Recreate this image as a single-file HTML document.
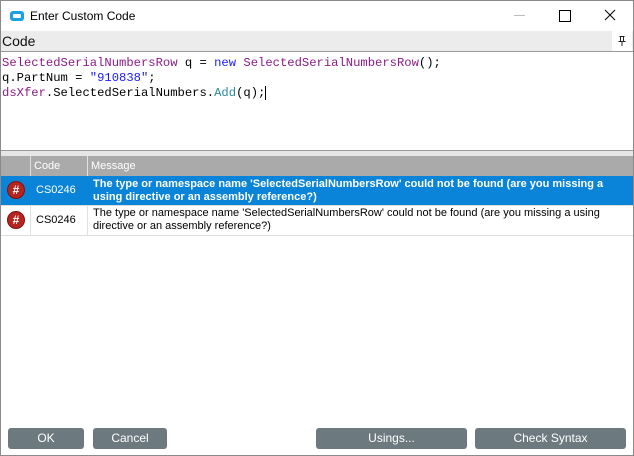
<!DOCTYPE html>
<html><head><style>
body{margin:0;width:634px;height:456px;overflow:hidden;background:#fff;font-family:"Liberation Sans",sans-serif;position:relative}
.win{position:absolute;inset:0;border:1px solid #8a8a8a;box-sizing:border-box}
.abs{position:absolute}
.code{font-family:"Liberation Mono",monospace;font-size:12.2px;line-height:15px;color:#000;white-space:pre}
.p{color:#8b1b8b}.b{color:#1a1aff}.t{color:#2b8a9a}
.btn{position:absolute;top:428px;height:21px;background:#6c7a80;color:#fff;border-radius:3px;font-size:12px;text-align:center;line-height:21px}
.hash{position:absolute;left:7px;width:16px;height:16px;border-radius:50%;background:#b5241e;border:1px solid #7a1410;color:#fff;font-weight:bold;font-size:12px;text-align:center;line-height:16px}
.msg{font-size:11px;line-height:13px}
</style></head><body>
<div class="win"></div>
<div class="abs" style="left:10px;top:11px;width:14px;height:10px;border-radius:3px;background:#18a0e0"></div>
<div class="abs" style="left:13px;top:14px;width:8px;height:4px;border-radius:1px;background:#fff"></div>
<div class="abs" style="left:30px;top:9px;font-size:12px">Enter Custom Code</div>
<div class="abs" style="left:514px;top:15px;width:11px;height:1px;background:#bbb"></div>
<div class="abs" style="left:559px;top:10px;width:10px;height:10px;border:1px solid #000"></div>
<svg class="abs" style="left:604px;top:9px" width="12" height="12"><path d="M1 1L11 11M11 1L1 11" stroke="#000" stroke-width="1"/></svg>
<div class="abs" style="left:1px;top:31px;width:632px;height:20px;background:#ececec;border-bottom:1px solid #9a9a9a"></div>
<div class="abs" style="left:2px;top:33px;font-size:14px;color:#111">Code</div>
<div class="abs" style="left:612px;top:31px;width:20px;height:20px;background:#fff"></div>
<svg class="abs" style="left:617px;top:35px" width="10" height="12"><path d="M2.5 1.5H7.5M3.5 1.5V6.5M6.5 1.5V6.5M1.5 6.5H8.5M5 6.5V11" stroke="#222" stroke-width="1" fill="none"/></svg>
<div class="abs code" style="left:2px;top:56px"><span class="p">SelectedSerialNumbersRow</span> q = <span class="b">new</span> <span class="p">SelectedSerialNumbersRow</span>();
q.PartNum = <span class="b">"910838"</span>;
<span class="p">dsXfer</span>.SelectedSerialNumbers.<span class="t">Add</span>(q);<span style="border-left:1px solid #000"></span></div>
<div class="abs" style="left:1px;top:150px;width:632px;height:6px;background:#e6e6e6;border-top:1px solid #9a9a9a"></div>
<div class="abs" style="left:1px;top:156px;width:632px;height:20px;background:#aaaaaa"></div>
<div class="abs" style="left:30px;top:156px;width:1px;height:80px;background:#e0e0e0"></div>
<div class="abs" style="left:87px;top:156px;width:1px;height:80px;background:#e0e0e0"></div>
<div class="abs" style="left:34px;top:160px;font-size:11px;color:#fff">Code</div>
<div class="abs" style="left:91px;top:160px;font-size:11px;color:#fff">Message</div>
<div class="abs" style="left:1px;top:176px;width:632px;height:29px;background:#0a84d8"></div>
<div class="abs" style="left:1px;top:235px;width:632px;height:1px;background:#ddd"></div>
<div class="abs" style="left:1px;top:205px;width:632px;height:1px;background:#ddd"></div>
<div class="hash" style="top:181px">#</div>
<div class="hash" style="top:211px">#</div>
<div class="abs" style="left:36px;top:184px;font-size:11px;color:#fff">CS0246</div>
<div class="abs msg" style="left:93px;top:178px;color:#fff;font-weight:bold;width:540px">The type or namespace name 'SelectedSerialNumbersRow' could not be found (are you missing a using directive or an assembly reference?)</div>
<div class="abs" style="left:36px;top:214px;font-size:11px">CS0246</div>
<div class="abs msg" style="left:93px;top:207px;width:540px">The type or namespace name 'SelectedSerialNumbersRow' could not be found (are you missing a using directive or an assembly reference?)</div>
<div class="btn" style="left:8px;width:76px">OK</div>
<div class="btn" style="left:93px;width:74px">Cancel</div>
<div class="btn" style="left:316px;width:151px">Usings...</div>
<div class="btn" style="left:475px;width:151px">Check Syntax</div>
</body></html>
